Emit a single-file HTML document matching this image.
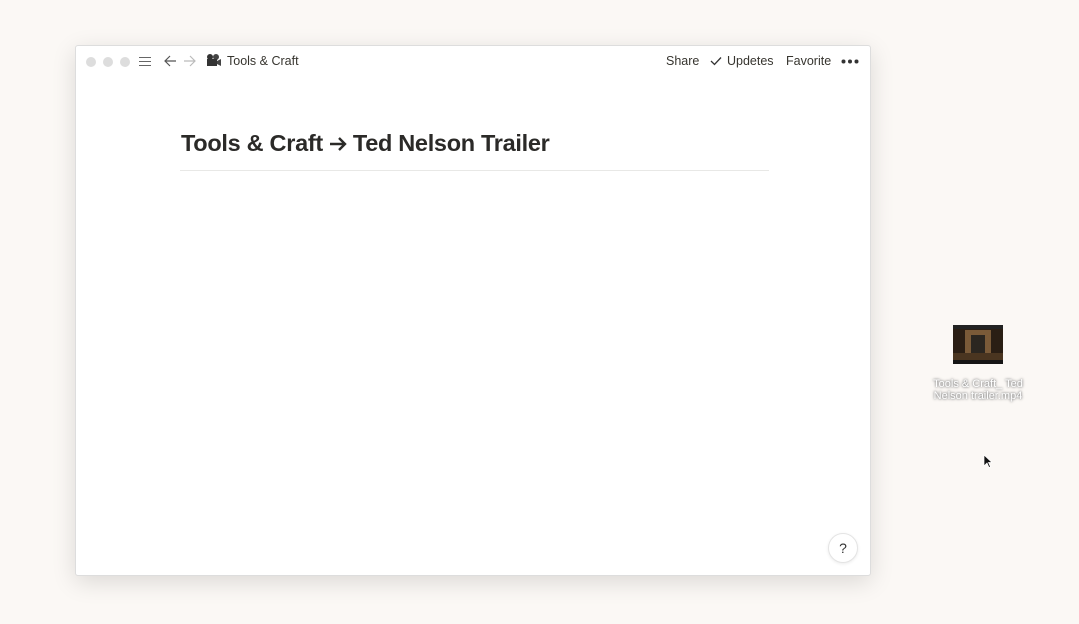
<!DOCTYPE html>
<html><head><meta charset="utf-8"><style>
*{margin:0;padding:0;box-sizing:border-box}
body{width:1079px;height:624px;background:#fbf8f5;position:relative;overflow:hidden;font-family:"Liberation Sans",sans-serif;color:#37352f}
.win{position:absolute;left:75px;top:45px;width:796px;height:531px;background:#fff;border:1px solid #ddd;border-radius:3px;box-shadow:0 6px 24px rgba(0,0,0,0.13)}
.dot{position:absolute;top:11px;width:10px;height:10px;border-radius:50%;background:#ddd}
.tb{position:absolute;top:8px;font-size:12.5px;color:#37352f}
h1{position:absolute;left:105px;top:84px;font-size:23.5px;font-weight:bold;color:#2b2a28;letter-spacing:-0.3px;white-space:nowrap}
h1 svg{vertical-align:-1px;margin:0 6px 0 6px}
.hr{position:absolute;left:104px;top:124px;width:589px;height:1px;background:#e8e8e6}
.help{position:absolute;left:752px;top:487px;width:30px;height:30px;border-radius:50%;border:1px solid #e4e4e4;background:#fff;box-shadow:0 1px 3px rgba(0,0,0,0.08);text-align:center;line-height:28px;font-size:14px;color:#333}
.lbl{position:absolute;left:918px;top:378px;width:120px;text-align:center;font-size:11px;line-height:12px;color:#fff;text-shadow:0 0 2px #777,0 0 3px #999}
</style></head><body>
<div class="win">
 <div class="dot" style="left:10px"></div><div class="dot" style="left:27px"></div><div class="dot" style="left:44px"></div>
 <svg style="position:absolute;left:62px;top:9px" width="14" height="13"><path d="M1 2.5H13M1 6.5H13M1 10.5H13" stroke="#666" stroke-width="1.1"/></svg>
 <svg style="position:absolute;left:87px;top:8px" width="14" height="14"><path d="M13 7H2M7 2L2 7L7 12" stroke="#555" stroke-width="1.2" fill="none"/></svg>
 <svg style="position:absolute;left:107px;top:8px" width="14" height="14"><path d="M1 7H12M7 2L12 7L7 12" stroke="#bbb" stroke-width="1.2" fill="none"/></svg>
 <svg style="position:absolute;left:130px;top:7px" width="16" height="15"><circle cx="4" cy="4" r="3" fill="#333"/><circle cx="10" cy="4" r="3" fill="#444"/><rect x="1" y="6" width="10" height="7" fill="#333"/><path d="M11 8L15 6V13L11 11Z" fill="#444"/></svg>
 <div class="tb" style="left:151px">Tools &amp; Craft</div>
 <div class="tb" style="left:590px">Share</div>
 <svg style="position:absolute;left:634px;top:10px" width="12" height="10"><path d="M1 5L4.5 8.5L11 1.5" stroke="#333" stroke-width="1.3" fill="none"/></svg>
 <div class="tb" style="left:651px">Updetes</div>
 <div class="tb" style="left:710px">Favorite</div>
 <svg style="position:absolute;left:765px;top:13px" width="18" height="5"><circle cx="2.5" cy="2.5" r="2" fill="#333"/><circle cx="9" cy="2.5" r="2" fill="#333"/><circle cx="15.5" cy="2.5" r="2" fill="#333"/></svg>
 <h1>Tools &amp; Craft<svg width="18" height="16"><path d="M1 8H16M10 2L16 8L10 14" stroke="#2b2a28" stroke-width="2.4" fill="none"/></svg>Ted Nelson Trailer</h1>
 <div class="hr"></div>
 <div class="help">?</div>
</div>
<svg style="position:absolute;left:953px;top:325px" width="50" height="39">
<rect width="50" height="39" fill="#2a1e14"/><rect y="0" width="50" height="4" fill="#222"/>
<rect x="12" y="5" width="26" height="26" fill="#7a5a38"/><rect x="18" y="10" width="14" height="20" fill="#2b2620"/>
<rect x="0" y="28" width="50" height="7" fill="#4a3520"/><rect y="35" width="50" height="4" fill="#151515"/></svg>
<div class="lbl">Tools &amp; Craft_ Ted<br>Nelson trailer.mp4</div>
<svg style="position:absolute;left:983px;top:454px" width="10" height="15"><path d="M1 1V12L4 9L6 13.5L7.5 12.8L5.5 8.5H9Z" fill="#111" stroke="#fff" stroke-width="0.7"/></svg>
</body></html>
